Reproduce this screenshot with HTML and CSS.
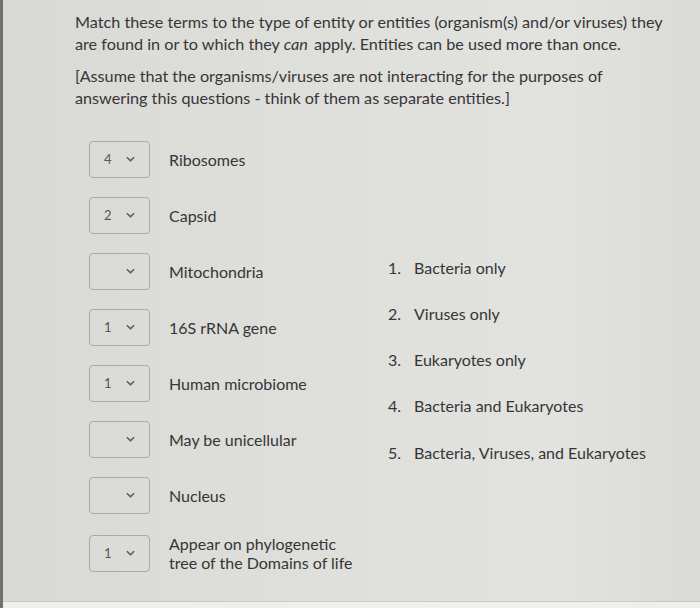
FILE: index.html
```html
<!DOCTYPE html>
<html>
<head>
<meta charset="utf-8">
<link rel="stylesheet" href="styles.css">
</head>
<body>
<div class="screen">
  <div class="content">
    <p class="intro">Match these terms to the type of entity or entities (organism(s) and/or viruses) they are found in or to which they <em class="stress">can</em> apply. Entities can be used more than once.</p>
    <p class="intro second">[Assume that the organisms/viruses are not interacting for the purposes of answering this questions - think of them as separate entities.]</p>
    <div class="matching">
      <div class="terms">
        <div class="row"><div class="select"><span class="val">4</span><svg class="chev" viewBox="0 0 10 6"><path d="M1 1 L5 5 L9 1"/></svg></div><div class="label">Ribosomes</div></div>
        <div class="row"><div class="select"><span class="val">2</span><svg class="chev" viewBox="0 0 10 6"><path d="M1 1 L5 5 L9 1"/></svg></div><div class="label">Capsid</div></div>
        <div class="row"><div class="select"><span class="val"></span><svg class="chev" viewBox="0 0 10 6"><path d="M1 1 L5 5 L9 1"/></svg></div><div class="label">Mitochondria</div></div>
        <div class="row"><div class="select"><span class="val">1</span><svg class="chev" viewBox="0 0 10 6"><path d="M1 1 L5 5 L9 1"/></svg></div><div class="label">16S rRNA gene</div></div>
        <div class="row"><div class="select"><span class="val">1</span><svg class="chev" viewBox="0 0 10 6"><path d="M1 1 L5 5 L9 1"/></svg></div><div class="label">Human microbiome</div></div>
        <div class="row"><div class="select"><span class="val"></span><svg class="chev" viewBox="0 0 10 6"><path d="M1 1 L5 5 L9 1"/></svg></div><div class="label">May be unicellular</div></div>
        <div class="row"><div class="select"><span class="val"></span><svg class="chev" viewBox="0 0 10 6"><path d="M1 1 L5 5 L9 1"/></svg></div><div class="label">Nucleus</div></div>
        <div class="row"><div class="select"><span class="val">1</span><svg class="chev" viewBox="0 0 10 6"><path d="M1 1 L5 5 L9 1"/></svg></div><div class="label two">Appear on phylogenetic<br>tree of the Domains of life</div></div>
      </div>
      <ol class="options">
        <li><span class="num">1.</span>Bacteria only</li>
        <li><span class="num">2.</span>Viruses only</li>
        <li><span class="num">3.</span>Eukaryotes only</li>
        <li><span class="num">4.</span>Bacteria and Eukaryotes</li>
        <li><span class="num">5.</span>Bacteria, Viruses, and Eukaryotes</li>
      </ol>
    </div>
  </div>
  <div class="bottom"></div>
</div>
</body>
</html>
```
FILE: styles.css
```css
html, body {
  margin: 0;
  padding: 0;
}
body {
  width: 700px;
  height: 608px;
  overflow: hidden;
  background: #dcdcd9;
  font-family: Lato, "Liberation Sans", sans-serif;
  color: #363636;
}
.screen {
  height: 608px;
  display: flex;
  flex-direction: column;
  border-left: 3px solid #707070;
  box-sizing: border-box;
  background: linear-gradient(90deg, #d9d9d6 0%, #dfdfdc 50%, #e2e2df 80%, #dadad7 100%);
}
.content {
  flex: 1;
  padding: 11px 0 0 72px;
}
.intro {
  margin: 0;
  font-size: 16.2px;
  line-height: 22px;
  width: 605px;
}
.intro.second {
  margin-top: 10px;
  width: 560px;
}
.stress {
  margin-right: 2px;
}
.matching {
  display: flex;
  margin-top: 31px;
}
.terms {
  width: 313px;
  padding-left: 14px;
  box-sizing: border-box;
  display: flex;
  flex-direction: column;
}
.row {
  height: 56px;
  display: flex;
  align-items: center;
}
.row:first-child {
  margin-top: -9px;
}
.row:last-child {
  margin-top: 2px;
}
.select {
  width: 61px;
  height: 37px;
  box-sizing: border-box;
  border: 1px solid #a9a9a7;
  border-radius: 4px;
  display: flex;
  align-items: center;
  padding-left: 14px;
  flex-shrink: 0;
}
.val {
  width: 22px;
  font-size: 13px;
  color: #555;
}
.chev {
  width: 9px;
  height: 6px;
  fill: none;
  stroke: #555;
  stroke-width: 1.6;
}
.label {
  margin-left: 19px;
  font-size: 16px;
  line-height: 19px;
}
.options {
  list-style: none;
  margin: 104px 0 0 0;
  padding: 0;
  font-size: 16px;
}
.options li {
  height: 46.25px;
  display: flex;
  align-items: center;
}
.num {
  width: 26px;
}
.bottom {
  height: 6px;
  background: #efefed;
  border-top: 1px solid #c8c8c5;
}
```
